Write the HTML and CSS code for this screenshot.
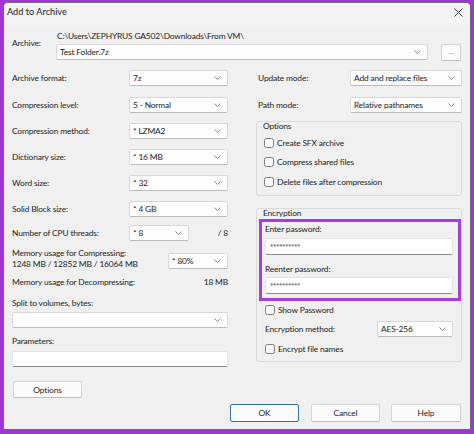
FILE: index.html
```html
<!DOCTYPE html>
<html>
<head>
<meta charset="utf-8">
<link rel="stylesheet" href="styles.css">
</head>
<body>
<div class="window">
  <div class="titlebar">
    <span class="title">Add to Archive</span>
    <svg class="close" width="9" height="9" viewBox="0 0 9 9"><path d="M0.5 0.5L8.5 8.5M8.5 0.5L0.5 8.5" stroke="#333" stroke-width="1"/></svg>
  </div>
  <div class="content">
    <div class="archive-row">
      <div class="archive-label">Archive:</div>
      <div class="archive-fields">
        <div class="path">C:\Users\ZEPHYRUS GA502\Downloads\From VM\</div>
        <div class="archive-input-row">
          <div class="combo archive-combo"><span>Test Folder.7z</span><svg class="chev" width="7" height="4" viewBox="0 0 7 4"><path d="M0.5 0.5L3.5 3.5L6.5 0.5" fill="none" stroke="#7a7a7a" stroke-width="0.9"/></svg></div>
          <div class="btn dots">...</div>
        </div>
      </div>
    </div>

    <div class="columns">
      <div class="left">
        <div class="frow r-first"><span class="lbl">Archive format:</span><div class="combo sel"><span>7z</span><svg class="chev" width="7" height="4" viewBox="0 0 7 4"><path d="M0.5 0.5L3.5 3.5L6.5 0.5" fill="none" stroke="#7a7a7a" stroke-width="0.9"/></svg></div></div>
        <div class="frow"><span class="lbl">Compression level:</span><div class="combo sel"><span>5 - Normal</span><svg class="chev" width="7" height="4" viewBox="0 0 7 4"><path d="M0.5 0.5L3.5 3.5L6.5 0.5" fill="none" stroke="#7a7a7a" stroke-width="0.9"/></svg></div></div>
        <div class="frow"><span class="lbl">Compression method:</span><div class="combo sel"><span>* LZMA2</span><svg class="chev" width="7" height="4" viewBox="0 0 7 4"><path d="M0.5 0.5L3.5 3.5L6.5 0.5" fill="none" stroke="#7a7a7a" stroke-width="0.9"/></svg></div></div>
        <div class="frow"><span class="lbl">Dictionary size:</span><div class="combo sel"><span>* 16 MB</span><svg class="chev" width="7" height="4" viewBox="0 0 7 4"><path d="M0.5 0.5L3.5 3.5L6.5 0.5" fill="none" stroke="#7a7a7a" stroke-width="0.9"/></svg></div></div>
        <div class="frow"><span class="lbl">Word size:</span><div class="combo sel"><span>* 32</span><svg class="chev" width="7" height="4" viewBox="0 0 7 4"><path d="M0.5 0.5L3.5 3.5L6.5 0.5" fill="none" stroke="#7a7a7a" stroke-width="0.9"/></svg></div></div>
        <div class="frow"><span class="lbl">Solid Block size:</span><div class="combo sel"><span>* 4 GB</span><svg class="chev" width="7" height="4" viewBox="0 0 7 4"><path d="M0.5 0.5L3.5 3.5L6.5 0.5" fill="none" stroke="#7a7a7a" stroke-width="0.9"/></svg></div></div>
        <div class="frow r-cpu"><span class="lbl">Number of CPU threads:</span><div class="combo sel-small"><span>* 8</span><svg class="chev" width="7" height="4" viewBox="0 0 7 4"><path d="M0.5 0.5L3.5 3.5L6.5 0.5" fill="none" stroke="#7a7a7a" stroke-width="0.9"/></svg></div><span class="right-text">/ 8</span></div>
        <div class="mem">
          <div class="mem-text">
            <div class="line">Memory usage for Compressing:</div>
            <div class="line">1248 MB / 12852 MB / 16064 MB</div>
          </div>
          <div class="combo sel-small mem-sel"><span>* 80%</span><svg class="chev" width="7" height="4" viewBox="0 0 7 4"><path d="M0.5 0.5L3.5 3.5L6.5 0.5" fill="none" stroke="#7a7a7a" stroke-width="0.9"/></svg></div>
        </div>
        <div class="decomp"><span>Memory usage for Decompressing:</span><span>18 MB</span></div>
        <div class="plain-label split-label">Split to volumes, bytes:</div>
        <div class="combo full"><span></span><svg class="chev" width="7" height="4" viewBox="0 0 7 4"><path d="M0.5 0.5L3.5 3.5L6.5 0.5" fill="none" stroke="#7a7a7a" stroke-width="0.9"/></svg></div>
        <div class="plain-label params-label">Parameters:</div>
        <div class="textbox full"></div>
        <div class="btn options-btn">Options</div>
      </div>

      <div class="right">
        <div class="frow r-first"><span class="lbl-r">Update mode:</span><div class="combo sel-r"><span>Add and replace files</span><svg class="chev" width="7" height="4" viewBox="0 0 7 4"><path d="M0.5 0.5L3.5 3.5L6.5 0.5" fill="none" stroke="#7a7a7a" stroke-width="0.9"/></svg></div></div>
        <div class="frow"><span class="lbl-r">Path mode:</span><div class="combo sel-r"><span>Relative pathnames</span><svg class="chev" width="7" height="4" viewBox="0 0 7 4"><path d="M0.5 0.5L3.5 3.5L6.5 0.5" fill="none" stroke="#7a7a7a" stroke-width="0.9"/></svg></div></div>

        <div class="group options-group">
          <div class="group-title">Options</div>
          <div class="check c1"><span class="box"></span><span>Create SFX archive</span></div>
          <div class="check c2"><span class="box"></span><span>Compress shared files</span></div>
          <div class="check c3"><span class="box"></span><span>Delete files after compression</span></div>
        </div>

        <div class="group enc-group">
          <div class="group-title">Encryption</div>
          <div class="highlight">
            <div class="pw-label">Enter password:</div>
            <div class="textbox pw">**********</div>
            <div class="pw-label pw-label2">Reenter password:</div>
            <div class="textbox pw pw2">**********</div>
          </div>
          <div class="check show-pw"><span class="box"></span><span>Show Password</span></div>
          <div class="enc-method"><span class="lbl-enc">Encryption method:</span><div class="combo sel-enc"><span>AES-256</span><svg class="chev" width="7" height="4" viewBox="0 0 7 4"><path d="M0.5 0.5L3.5 3.5L6.5 0.5" fill="none" stroke="#7a7a7a" stroke-width="0.9"/></svg></div></div>
          <div class="check enc-names"><span class="box"></span><span>Encrypt file names</span></div>
        </div>
      </div>
    </div>

    <div class="buttons">
      <div class="btn ok">OK</div>
      <div class="btn cancel">Cancel</div>
      <div class="btn help">Help</div>
    </div>
  </div>
</div>
</body>
</html>
```

FILE: styles.css
```css
html, body {
  margin: 0;
  padding: 0;
  background: #9e35d4;
}
body {
  width: 474px;
  height: 434px;
  overflow: hidden;
  font-family: "Lato", "Noto Sans", sans-serif;
  font-size: 8.4px;
  letter-spacing: -0.15px;
  color: #222222;
}
.window {
  margin: 2px 3px 4px 3px;
  height: 428px;
  box-sizing: border-box;
  border: 1px solid #6a6a6a;
  border-radius: 5px 5px 2px 2px;
  background: #f0f0f0;
  overflow: hidden;
}
.titlebar {
  height: 22px;
  display: flex;
  align-items: flex-start;
  justify-content: space-between;
  padding: 0 7px 0 3px;
  background: #f3f3f3;
}
.title {
  font-size: 9.2px;
  letter-spacing: 0;
  line-height: 18px;
  color: #1a1a1a;
}
.close {
  margin-top: 5px;
}
.content {
  padding: 0 8px;
}
.archive-row {
  display: flex;
  margin-top: 6px;
}
.archive-label {
  width: 44px;
  line-height: 10px;
  margin-top: 7px;
}
.archive-fields {
  flex: 1;
}
.path {
  line-height: 10px;
  padding-left: 1px;
}
.archive-input-row {
  display: flex;
  margin-top: 3px;
}
.combo {
  box-sizing: border-box;
  height: 16px;
  background: #fdfdfd;
  border: 1px solid #d8d8d8;
  border-bottom-color: #bcbcbc;
  border-radius: 2px;
  display: flex;
  align-items: center;
  justify-content: space-between;
  padding: 0 6px 0 3px;
  line-height: 10px;
}
.chev {
  flex: none;
}
.archive-combo {
  width: 372px;
  height: 16px;
}
.btn {
  box-sizing: border-box;
  background: #fbfbfb;
  border: 1px solid #d5d5d5;
  border-bottom-color: #bfbfbf;
  border-radius: 2px;
  display: flex;
  align-items: center;
  justify-content: center;
  line-height: 10px;
}
.dots {
  width: 20px;
  height: 17px;
  margin-left: 13px;
  color: #999;
  align-items: flex-end;
  padding-bottom: 4px;
}
.columns {
  display: flex;
  justify-content: space-between;
  margin-top: 9px;
}
.left {
  width: 216px;
  display: flex;
  flex-direction: column;
}
.right {
  width: 206px;
  display: flex;
  flex-direction: column;
}
.frow {
  display: flex;
  align-items: center;
  height: 16px;
  margin-top: 10px;
}
.frow.r-first {
  margin-top: 0;
  margin-bottom: 1px;
}
.frow.r-cpu {
  margin-top: 8px;
}
.lbl {
  width: 117px;
  flex: none;
}
.sel {
  flex: 1;
}
.sel-small {
  width: 60px;
  flex: none;
}
.right-text {
  margin-left: auto;
}
.mem {
  display: flex;
  margin-top: 7px;
}
.mem-text .line {
  line-height: 11px;
}
.mem-sel {
  margin-left: auto;
  margin-top: 5px;
}
.decomp {
  display: flex;
  justify-content: space-between;
  line-height: 10px;
  margin-top: 7px;
}
.plain-label {
  line-height: 10px;
}
.split-label {
  margin-top: 11px;
}
.full {
  margin-top: 4px;
}
.textbox {
  box-sizing: border-box;
  height: 16px;
  background: #ffffff;
  border: 1px solid #e3e3e3;
  border-bottom: 1px solid #8c8c8c;
  border-radius: 2px;
}
.params-label {
  margin-top: 8px;
}
.textbox.full {
  margin-top: 5px;
}
.options-btn {
  width: 69px;
  height: 17px;
  margin-top: 14px;
  margin-left: 1px;
}
.lbl-r {
  width: 94px;
  padding-left: 2px;
  box-sizing: border-box;
  flex: none;
}
.sel-r {
  flex: 1;
}
.group {
  box-sizing: border-box;
  border: 1px solid #dadada;
  border-radius: 3px;
  display: flex;
  flex-direction: column;
}
.group-title {
  line-height: 10px;
  padding-left: 6px;
  margin-top: -1px;
}
.options-group {
  margin-top: 8px;
  padding-bottom: 7px;
}
.check {
  display: flex;
  align-items: center;
  height: 12px;
  padding-left: 7px;
}
.check .box {
  box-sizing: border-box;
  width: 10px;
  height: 10px;
  border: 1px solid #7c7c7c;
  border-radius: 2.5px;
  background: #f7f7f7;
  margin-right: 3px;
  flex: none;
}
.c1 { margin-top: 6px; }
.c2 { margin-top: 7px; }
.c3 { margin-top: 8px; }
.enc-group {
  margin-top: 12px;
  padding-bottom: 6px;
}
.highlight {
  margin: 1px 0 0 2px;
  border: 3px solid #a33fe0;
  padding: 2px 5px 4px 3px;
}
.pw-label {
  line-height: 10px;
}
.pw-label2 {
  margin-top: 9px;
}
.pw {
  height: 17px;
  margin-top: 4px;
  font-family: "Noto Sans", sans-serif;
  font-size: 6px;
  letter-spacing: -0.3px;
  line-height: 10px;
  padding: 2px 0 0 4px;
  color: #444;
}
.pw2 {
  margin-top: 3px;
}
.show-pw {
  margin-top: 3px;
  padding-left: 8px;
}
.enc-method {
  display: flex;
  align-items: center;
  margin-top: 5px;
  padding-left: 8px;
  padding-right: 8px;
}
.lbl-enc {
  width: 112px;
  flex: none;
}
.sel-enc {
  flex: 1;
}
.enc-names {
  margin-top: 6px;
  padding-left: 8px;
}
.buttons {
  display: flex;
  justify-content: flex-end;
  margin-top: 6px;
}
.buttons .btn {
  height: 18px;
}
.ok {
  width: 69px;
  border: 1px solid #2f6fb8;
  margin-right: 12px;
}
.cancel {
  width: 69px;
  margin-right: 11px;
}
.help {
  width: 70px;
  margin-right: 1px;
}
```
